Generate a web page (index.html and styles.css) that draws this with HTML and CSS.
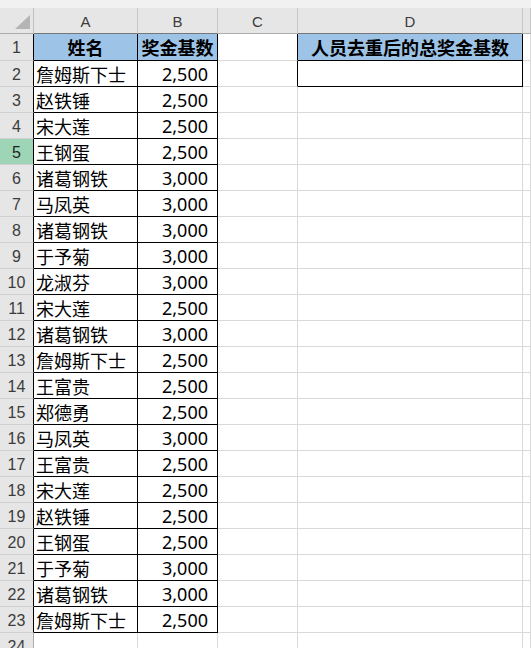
FILE: index.html
```html
<!DOCTYPE html>
<html lang="zh">
<head>
<meta charset="utf-8">
<title>Sheet</title>
<link rel="stylesheet" href="styles.css">
</head>
<body>
<div class="strip"></div>
<div class="sheet">
  <div class="corner"><span class="tri"></span></div>
  <div class="ch dark">A</div>
  <div class="ch dark">B</div>
  <div class="ch">C</div>
  <div class="ch dark">D</div>
  <div class="ch"></div>

  <div class="rh r1 edge">1</div>
  <div class="c head box">姓名</div>
  <div class="c head box">奖金基数</div>
  <div class="c edge"></div>
  <div class="c head box">人员去重后的总奖金基数</div>
  <div class="c"></div>

  <div class="rh edge">2</div>
  <div class="c t box">詹姆斯下士</div>
  <div class="c n box">2,500</div>
  <div class="c edge"></div>
  <div class="c box"></div>
  <div class="c"></div>

  <div class="rh edge">3</div><div class="c t box">赵铁锤</div><div class="c n box">2,500</div><div class="c"></div><div class="c"></div><div class="c"></div>
  <div class="rh edge">4</div><div class="c t box">宋大莲</div><div class="c n box">2,500</div><div class="c"></div><div class="c"></div><div class="c"></div>
  <div class="rh edge sel">5</div><div class="c t box">王钢蛋</div><div class="c n box">2,500</div><div class="c"></div><div class="c"></div><div class="c"></div>
  <div class="rh edge">6</div><div class="c t box">诸葛钢铁</div><div class="c n box">3,000</div><div class="c"></div><div class="c"></div><div class="c"></div>
  <div class="rh edge">7</div><div class="c t box">马凤英</div><div class="c n box">3,000</div><div class="c"></div><div class="c"></div><div class="c"></div>
  <div class="rh edge">8</div><div class="c t box">诸葛钢铁</div><div class="c n box">3,000</div><div class="c"></div><div class="c"></div><div class="c"></div>
  <div class="rh edge">9</div><div class="c t box">于予菊</div><div class="c n box">3,000</div><div class="c"></div><div class="c"></div><div class="c"></div>
  <div class="rh edge">10</div><div class="c t box">龙淑芬</div><div class="c n box">3,000</div><div class="c"></div><div class="c"></div><div class="c"></div>
  <div class="rh edge">11</div><div class="c t box">宋大莲</div><div class="c n box">2,500</div><div class="c"></div><div class="c"></div><div class="c"></div>
  <div class="rh edge">12</div><div class="c t box">诸葛钢铁</div><div class="c n box">3,000</div><div class="c"></div><div class="c"></div><div class="c"></div>
  <div class="rh edge">13</div><div class="c t box">詹姆斯下士</div><div class="c n box">2,500</div><div class="c"></div><div class="c"></div><div class="c"></div>
  <div class="rh edge">14</div><div class="c t box">王富贵</div><div class="c n box">2,500</div><div class="c"></div><div class="c"></div><div class="c"></div>
  <div class="rh edge">15</div><div class="c t box">郑德勇</div><div class="c n box">2,500</div><div class="c"></div><div class="c"></div><div class="c"></div>
  <div class="rh edge">16</div><div class="c t box">马凤英</div><div class="c n box">3,000</div><div class="c"></div><div class="c"></div><div class="c"></div>
  <div class="rh edge">17</div><div class="c t box">王富贵</div><div class="c n box">2,500</div><div class="c"></div><div class="c"></div><div class="c"></div>
  <div class="rh edge">18</div><div class="c t box">宋大莲</div><div class="c n box">2,500</div><div class="c"></div><div class="c"></div><div class="c"></div>
  <div class="rh edge">19</div><div class="c t box">赵铁锤</div><div class="c n box">2,500</div><div class="c"></div><div class="c"></div><div class="c"></div>
  <div class="rh edge">20</div><div class="c t box">王钢蛋</div><div class="c n box">2,500</div><div class="c"></div><div class="c"></div><div class="c"></div>
  <div class="rh edge">21</div><div class="c t box">于予菊</div><div class="c n box">3,000</div><div class="c"></div><div class="c"></div><div class="c"></div>
  <div class="rh edge">22</div><div class="c t box">诸葛钢铁</div><div class="c n box">3,000</div><div class="c"></div><div class="c"></div><div class="c"></div>
  <div class="rh edge">23</div><div class="c t box">詹姆斯下士</div><div class="c n box">2,500</div><div class="c"></div><div class="c"></div><div class="c"></div>
  <div class="rh">24</div><div class="c"></div><div class="c"></div><div class="c"></div><div class="c"></div><div class="c"></div>
</div>
</body>
</html>
```
FILE: styles.css
```css
html, body {
  margin: 0;
  padding: 0;
  background: #ffffff;
  overflow: hidden;
}
body {
  width: 531px;
  height: 648px;
  font-family: "Noto Sans", "Noto Sans CJK SC", sans-serif;
}
.strip {
  height: 8px;
  background: #f1f1f1;
}
.sheet {
  display: grid;
  grid-template-columns: 34px 104px 80px 80px 225px 8px;
  grid-template-rows: 26px 27px repeat(23, 26px);
}
.sheet > div {
  box-sizing: border-box;
  border-right: 1px solid #d9d9d9;
  border-bottom: 1px solid #d9d9d9;
  display: flex;
  align-items: center;
  overflow: hidden;
  white-space: nowrap;
}
.corner {
  background: #e6e6e6;
  position: relative;
  border-right-color: #c0c0c0 !important;
  border-bottom-color: #ababab !important;
}
.tri {
  position: absolute;
  left: 15px;
  top: 7px;
  width: 0;
  height: 0;
  border-left: 15px solid transparent;
  border-bottom: 14px solid #b4b4b4;
}
.ch {
  background: #e6e6e6;
  justify-content: center;
  font-family: "Liberation Sans", sans-serif;
  font-size: 15px;
  color: #3c3c3c;
  border-right-color: #c8c8c8 !important;
  border-bottom-color: #ababab !important;
  padding-top: 1px;
}
.rh {
  background: #e6e6e6;
  justify-content: center;
  font-family: "Liberation Sans", sans-serif;
  font-size: 16px;
  color: #3c3c3c;
  border-right-color: #ababab !important;
  border-bottom-color: #d0d0d0 !important;
  padding-top: 2px;
}
.rh.sel {
  background: #9fd5b7;
  color: #222;
}
.edge {
  border-right-color: #000 !important;
}
.ch.dark {
  border-bottom-color: #777 !important;
}
.c {
  background: #ffffff;
  font-size: 18px;
  color: #000;
}
.box {
  border-right-color: #000 !important;
  border-bottom-color: #000 !important;
}
.head {
  background: #9dc3e6;
  justify-content: center;
  font-weight: bold;
  font-family: "Noto Sans CJK SC", sans-serif;
}
.t {
  padding-left: 2px;
  font-family: "Noto Sans CJK SC", sans-serif;
}
.n {
  justify-content: flex-end;
  padding-right: 9px;
  font-family: "Noto Sans", sans-serif;
}
```
